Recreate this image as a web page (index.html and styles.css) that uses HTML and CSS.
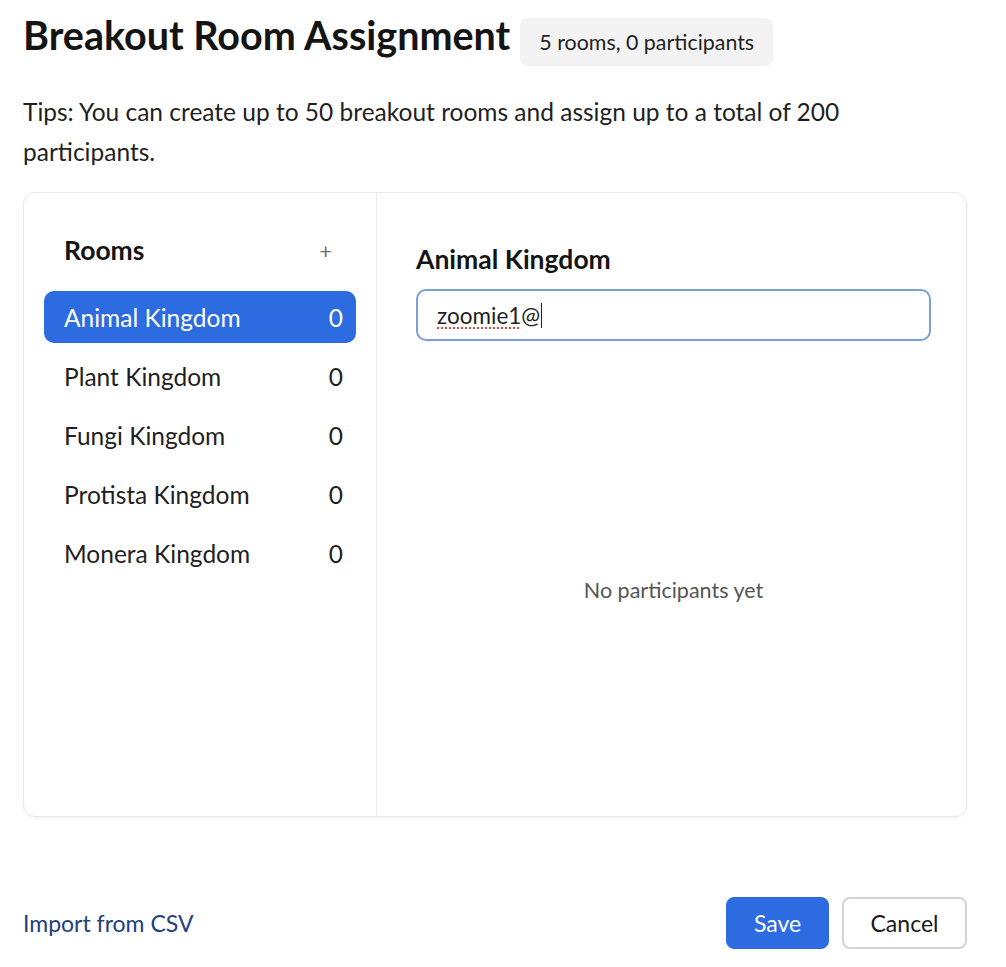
FILE: index.html
```html
<!DOCTYPE html>
<html lang="en">
<head>
    <meta charset="UTF-8">
    <meta content="width=device-width, initial-scale=1.0" name="viewport">
    <link rel="stylesheet" href="styles.css">
</head>
<body>
    <div id="dialog">
        <!-- Title row -->
        <div class="titleRow">
            <h1 class="title">Breakout Room Assignment</h1>
            <span class="badge">5 rooms, 0 participants</span>
        </div>

        <p class="tips">Tips: You can create up to 50 breakout rooms and assign up to a total of 200 participants.</p>

        <!-- Rooms and participants -->
        <div class="panel">
            <div class="roomList">
                <div class="roomHead">
                    <span>Rooms</span>
                    <span class="addBtn">+</span>
                </div>
                <div class="room selected"><span>Animal Kingdom</span><span>0</span></div>
                <div class="room"><span>Plant Kingdom</span><span>0</span></div>
                <div class="room"><span>Fungi Kingdom</span><span>0</span></div>
                <div class="room"><span>Protista Kingdom</span><span>0</span></div>
                <div class="room"><span>Monera Kingdom</span><span>0</span></div>
            </div>
            <div class="roomDetail">
                <h2 class="roomName">Animal Kingdom</h2>
                <div class="searchBox"><span class="typo">zoomie1</span>@<span class="caret"></span></div>
                <div class="empty">No participants yet</div>
            </div>
        </div>

        <!-- Footer -->
        <div class="footer">
            <a href="#" class="importLink">Import from CSV</a>
            <div class="actions">
                <button class="btn save" type="button">Save</button>
                <button class="btn cancel" type="button">Cancel</button>
            </div>
        </div>
    </div>
</body>
</html>
```

FILE: styles.css
```css
body {
    font-family: Lato, "Open Sans", sans-serif;
    margin: 0;
    background: #fff;
    color: #1a1a1a;
}

#dialog {
    width: 944px;
    padding: 11px 0 0 23px;
}

.titleRow {
    display: flex;
    align-items: baseline;
    gap: 10px;
}

.title {
    font-size: 39.5px;
    line-height: 48px;
    font-weight: 700;
    margin: 0;
    color: #141414;
}

.badge {
    font-size: 21.4px;
    line-height: 48px;
    padding: 0 19px;
    background: #f3f3f4;
    border-radius: 8px;
    color: #1f1f1f;
}

.tips {
    font-size: 24.5px;
    line-height: 40px;
    margin: 26px 0 20px;
    color: #1f1f1f;
}

.panel {
    display: flex;
    height: 625px;
    box-sizing: border-box;
    border: 1px solid #e9e9ea;
    border-radius: 12px;
    box-shadow: 0 1px 3px rgba(0, 0, 0, 0.06);
}

.roomList {
    width: 332px;
    padding: 37px 0 0 20px;
    border-right: 1px solid #ececec;
}

.roomHead {
    display: flex;
    justify-content: space-between;
    align-items: center;
    height: 40px;
    padding: 0 44px 0 20px;
    font-size: 26.5px;
    font-weight: 700;
    margin-bottom: 21px;
    color: #141414;
}

.addBtn {
    font-weight: 400;
    color: #707070;
    font-size: 22px;
}

.room {
    display: flex;
    justify-content: space-between;
    align-items: center;
    width: 312px;
    height: 52px;
    margin-bottom: 7px;
    padding: 0 13px 0 20px;
    box-sizing: border-box;
    font-size: 24.5px;
    border-radius: 10px;
    color: #1f1f1f;
}

.room.selected {
    background: #2d6be0;
    color: #fff;
}

.roomDetail {
    flex: 1;
    display: flex;
    flex-direction: column;
    padding: 46px 35px 0 39px;
}

.roomName {
    font-size: 26.5px;
    line-height: 40px;
    font-weight: 700;
    margin: 0 0 10px;
    color: #141414;
}

.searchBox {
    height: 52px;
    box-sizing: border-box;
    border: 2px solid #7d9fd8;
    border-radius: 10px;
    padding: 0 19px;
    display: flex;
    align-items: center;
    font-size: 22.5px;
    color: #1f1f1f;
}

.typo {
    text-decoration: underline dotted #e0443a;
    text-decoration-thickness: 2px;
    text-underline-offset: 4px;
}

.caret {
    display: inline-block;
    width: 1px;
    height: 25px;
    background: #222;
    margin-left: 1px;
}

.empty {
    text-align: center;
    margin-top: 236px;
    font-size: 21.5px;
    color: #555;
}

.footer {
    display: flex;
    justify-content: space-between;
    align-items: center;
    margin-top: 80px;
}

.importLink {
    font-size: 23px;
    color: #23407f;
    text-decoration: none;
}

.actions {
    display: flex;
    gap: 13px;
}

.btn {
    font-family: Lato, "Open Sans", sans-serif;
    font-size: 23px;
    height: 52px;
    border-radius: 8px;
    cursor: pointer;
}

.save {
    width: 103px;
    background: #2d6be0;
    border: 1px solid #2d6be0;
    color: #fff;
}

.cancel {
    width: 125px;
    background: #fff;
    border: 2px solid #d4d4d4;
    color: #1a1a1a;
}
```
